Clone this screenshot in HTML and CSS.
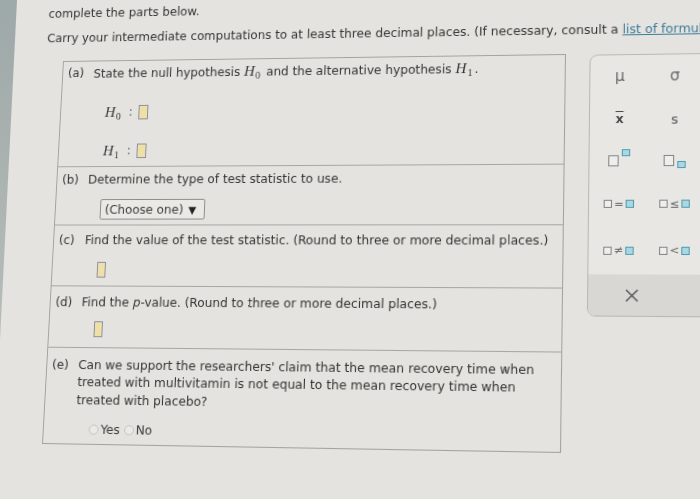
FILE: index.html
```html
<!DOCTYPE html>
<html lang="en">
<head>
<meta charset="utf-8">
<title>Hypothesis test</title>
<link rel="stylesheet" href="styles.css">
</head>
<body>
<div class="bezel"></div>
<div class="page">
  <p class="intro intro-1">complete the parts below.</p>
  <p class="intro intro-2">Carry your intermediate computations to at least three decimal places. (If necessary, consult a <a class="link" href="#">list of formulas</a>.)</p>

  <div class="main">
    <div class="qbox">
      <section class="sec sec-a">
        <div class="qrow"><span class="lbl">(a)</span><span class="qtext">State the null hypothesis <var>H</var><sub>0</sub> and the alternative hypothesis <var>H</var><sub>1</sub>.</span></div>
        <div class="hyp hyp-0"><span class="hname"><var>H</var><sub>0</sub></span><span class="colon">:</span><span class="blank"></span></div>
        <div class="hyp hyp-1"><span class="hname"><var>H</var><sub>1</sub></span><span class="colon">:</span><span class="blank"></span></div>
      </section>
      <section class="sec sec-b">
        <div class="qrow"><span class="lbl">(b)</span><span class="qtext">Determine the type of test statistic to use.</span></div>
        <div class="ctl"><span class="select"><span>(Choose one)</span><span class="arrow">&#9660;</span></span></div>
      </section>
      <section class="sec sec-c">
        <div class="qrow"><span class="lbl">(c)</span><span class="qtext">Find the value of the test statistic. (Round to three or more decimal places.)</span></div>
        <div class="ctl"><span class="blank"></span></div>
      </section>
      <section class="sec sec-d">
        <div class="qrow"><span class="lbl">(d)</span><span class="qtext">Find the <i>p</i>-value. (Round to three or more decimal places.)</span></div>
        <div class="ctl"><span class="blank"></span></div>
      </section>
      <section class="sec sec-e">
        <div class="qrow"><span class="lbl">(e)</span><span class="qtext wrap">Can we support the researchers' claim that the mean recovery time when treated with multivitamin is not equal to the mean recovery time when treated with placebo?</span></div>
        <div class="ctl radios">
          <span class="radio"></span><span class="rlabel">Yes</span>
          <span class="radio"></span><span class="rlabel">No</span>
        </div>
      </section>
    </div>

    <div class="palette">
      <div class="pgrid">
        <span class="pk sym">&mu;</span>
        <span class="pk sym">&sigma;</span>
        <span class="pk xbar">x</span>
        <span class="pk ess">s</span>
        <span class="pk">
          <span class="ico ico-sup"><span class="gbox big"></span><span class="bbox small up"></span></span>
        </span>
        <span class="pk">
          <span class="ico ico-sub"><span class="gbox big"></span><span class="bbox small down"></span></span>
        </span>
        <span class="pk"><span class="rel"><span class="gbox"></span><span class="op">=</span><span class="bbox"></span></span></span>
        <span class="pk"><span class="rel"><span class="gbox"></span><span class="op">&le;</span><span class="bbox"></span></span></span>
        <span class="pk"><span class="rel"><span class="gbox"></span><span class="op">&ne;</span><span class="bbox"></span></span></span>
        <span class="pk"><span class="rel"><span class="gbox"></span><span class="op">&lt;</span><span class="bbox"></span></span></span>
      </div>
      <div class="pfoot">
        <svg class="xicon" width="13" height="13" viewBox="0 0 13 13"><path d="M1 1 L12 12 M12 1 L1 12" stroke="#555" stroke-width="1.4" fill="none"/></svg>
      </div>
    </div>
  </div>
</div>
</body>
</html>
```

FILE: styles.css
```css
html, body {
  margin: 0;
  padding: 0;
  height: 100%;
  overflow: hidden;
}
body {
  background: #e4e3df;
  font-family: "DejaVu Sans", Verdana, sans-serif;
  font-size: 12.2px;
  color: #343434;
}
.bezel {
  position: absolute;
  left: 0;
  top: 0;
  width: 17px;
  height: 340px;
  background: linear-gradient(#9da8a8, #b8bdba);
  clip-path: polygon(0 0, 100% 0, 0 100%);
  z-index: 2;
}
.page {
  width: 760px;
  height: 520px;
  transform-origin: 0 0;
  transform: matrix3d(0.932724, -0.017710, 0, -0.0000764436,
                      -0.056577, 0.936090, 0, -0.0000791386,
                      0, 0, 1, 0,
                      17.1886, 8.04614, 0, 1);
}
.intro {
  margin: 0 0 0 34px;
  line-height: 18px;
  white-space: nowrap;
}
.intro-1 { position: relative; top: -2px; margin-bottom: -2px; }
.intro-2 { margin-top: 8px; }
.link { color: #3d7c9c; text-decoration: underline; }

.main {
  display: flex;
  align-items: flex-start;
  margin: 15px 0 0 52px;
}
.qbox {
  box-sizing: border-box;
  width: 511px;
  height: 391px;
  border: 1px solid #a2a2a0;
  display: flex;
  flex-direction: column;
}
.sec {
  box-sizing: border-box;
  border-bottom: 1px solid #a6a6a4;
  padding-left: 5px;
}
.sec-a { height: 110px; padding-top: 3px; }
.sec-b { height: 60px; padding-top: 4px; }
.sec-c { height: 62px; padding-top: 6px; }
.sec-d { height: 62px; padding-top: 7px; }
.sec-e { height: 95px; padding-top: 9px; border-bottom: none; }

.qrow {
  display: flex;
  line-height: 18px;
}
.sec-e .qrow { line-height: 17.4px; }
.lbl { flex: 0 0 27px; }
.qtext { flex: 1; white-space: nowrap; }
.qtext.wrap { white-space: normal; padding-right: 18px; }

var {
  font-family: "Liberation Serif", "Times New Roman", serif;
  font-style: italic;
  font-size: 15px;
}
sub {
  font-family: "Liberation Serif", "Times New Roman", serif;
  font-size: 10px;
  vertical-align: -3px;
  line-height: 0;
  margin-left: 1px;
}
.qtext sub { margin-right: 2px; }

.hyp {
  display: flex;
  align-items: center;
  height: 22px;
  margin-left: 41px;
}
.hname { display: inline-block; line-height: 22px; }
.hyp-0 { margin-top: 20px; }
.hyp-1 { margin-top: 18px; }
.colon {
  margin-left: 8px;
  margin-right: 6px;
  color: #555;
}
.blank {
  display: inline-block;
  box-sizing: border-box;
  width: 9px;
  height: 16px;
  border: 1.5px solid #8a8ea6;
  background: #efe0a6;
}
.hyp .blank { width: 10px; height: 15px; }

.ctl { margin-left: 41px; }
.sec-b .ctl { margin-top: 11px; }
.sec-c .ctl { margin-top: 13px; }
.sec-d .ctl { margin-top: 10px; }
.ctl .blank { display: block; }

.select {
  box-sizing: border-box;
  display: flex;
  align-items: center;
  justify-content: space-between;
  width: 108px;
  height: 21px;
  padding: 0 8px 0 4px;
  border: 1px solid #8c8c8a;
  border-radius: 2px;
  background: #eae9e5;
  color: #3a3a3a;
}
.arrow { font-size: 10.5px; color: #222; }

.radios {
  display: flex;
  align-items: center;
  height: 16px;
  margin-top: 12px;
}
.radio {
  box-sizing: border-box;
  width: 10px;
  height: 10px;
  border: 1px solid #c2c2c0;
  border-radius: 50%;
  background: #ebeae7;
  margin-right: 2px;
}
.rlabel { margin-right: 4px; color: #3a3a3a; }

.palette {
  box-sizing: border-box;
  flex: 0 0 140px;
  width: 140px;
  height: 259px;
  margin: 1px 0 0 23px;
  border: 1px solid #b8b8b6;
  border-radius: 8px;
  background: #e8e7e4;
  display: flex;
  flex-direction: column;
  overflow: hidden;
}
.pgrid {
  display: grid;
  grid-template-columns: 53px 53px;
  grid-template-rows: 42px 44px 38px 48px 43px;
  padding-left: 2px;
}
.pk {
  display: flex;
  align-items: center;
  justify-content: center;
  color: #5c5c5c;
}
.sym {
  font-family: "DejaVu Sans", sans-serif;
  font-size: 15px;
  color: #6a6a6a;
}
.xbar {
  font-family: "DejaVu Sans", sans-serif;
  font-size: 12px;
  font-weight: bold;
  color: #4a4a4a;
  text-decoration: overline;
}
.ess {
  font-family: "DejaVu Sans", sans-serif;
  font-size: 13px;
  color: #4e4e4e;
}
.ico {
  position: relative;
  display: inline-block;
  width: 22px;
  height: 12px;
}
.gbox {
  display: inline-block;
  box-sizing: border-box;
  width: 8px;
  height: 8px;
  border: 1px solid #858585;
  background: #eeeeec;
}
.bbox {
  display: inline-block;
  box-sizing: border-box;
  width: 8px;
  height: 8px;
  border: 1px solid #4f9db0;
  background: #a9d8e2;
}
.big {
  position: absolute;
  left: 0;
  top: 1px;
  width: 10px;
  height: 11px;
}
.small {
  position: absolute;
  left: 13px;
  width: 8px;
  height: 7px;
}
.up { top: -5px; }
.down { top: 7px; }
.rel {
  display: flex;
  align-items: center;
  gap: 2px;
}
.op {
  font-size: 11px;
  color: #666;
  line-height: 1;
}
.pfoot {
  flex: 1;
  margin-top: 2px;
  background: #d8d7d4;
  display: flex;
  align-items: center;
  padding-left: 35px;
}
.xicon { display: block; }
```
